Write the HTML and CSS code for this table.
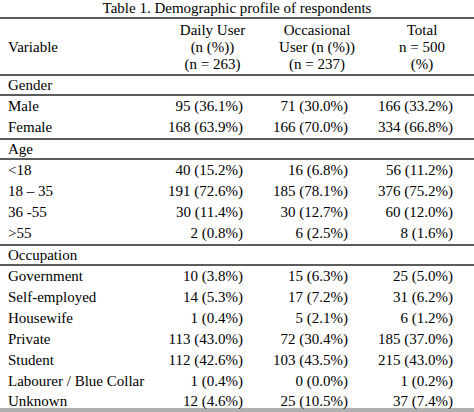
FILE: index.html
```html
<!DOCTYPE html>
<html>
<head>
<meta charset="utf-8">
<link rel="stylesheet" href="styles.css">
</head>
<body>
<div class="title">Table 1. Demographic profile of respondents</div>
<table class="demo">
  <colgroup>
    <col class="c1"><col class="c2"><col class="c3"><col class="c4">
  </colgroup>
  <thead>
    <tr class="head">
      <th class="var">Variable</th>
      <th class="h2">Daily User<br>(n (%))<br>(n = 263)</th>
      <th class="h3">Occasional<br>User (n (%))<br>(n = 237)</th>
      <th class="h4">Total<br>n = 500<br>(%)</th>
    </tr>
  </thead>
  <tbody>
    <tr class="sec"><td colspan="4">Gender</td></tr>
    <tr class="row"><td>Male</td><td class="n2">95 (36.1%)</td><td class="n3">71 (30.0%)</td><td class="n4">166 (33.2%)</td></tr>
    <tr class="row last"><td>Female</td><td class="n2">168 (63.9%)</td><td class="n3">166 (70.0%)</td><td class="n4">334 (66.8%)</td></tr>
    <tr class="sec"><td colspan="4">Age</td></tr>
    <tr class="row"><td>&lt;18</td><td class="n2">40 (15.2%)</td><td class="n3">16 (6.8%)</td><td class="n4">56 (11.2%)</td></tr>
    <tr class="row"><td>18 – 35</td><td class="n2">191 (72.6%)</td><td class="n3">185 (78.1%)</td><td class="n4">376 (75.2%)</td></tr>
    <tr class="row"><td>36 -55</td><td class="n2">30 (11.4%)</td><td class="n3">30 (12.7%)</td><td class="n4">60 (12.0%)</td></tr>
    <tr class="row last"><td>&gt;55</td><td class="n2">2 (0.8%)</td><td class="n3">6 (2.5%)</td><td class="n4">8 (1.6%)</td></tr>
    <tr class="sec"><td colspan="4">Occupation</td></tr>
    <tr class="row"><td>Government</td><td class="n2">10 (3.8%)</td><td class="n3">15 (6.3%)</td><td class="n4">25 (5.0%)</td></tr>
    <tr class="row"><td>Self-employed</td><td class="n2">14 (5.3%)</td><td class="n3">17 (7.2%)</td><td class="n4">31 (6.2%)</td></tr>
    <tr class="row"><td>Housewife</td><td class="n2">1 (0.4%)</td><td class="n3">5 (2.1%)</td><td class="n4">6 (1.2%)</td></tr>
    <tr class="row"><td>Private</td><td class="n2">113 (43.0%)</td><td class="n3">72 (30.4%)</td><td class="n4">185 (37.0%)</td></tr>
    <tr class="row"><td>Student</td><td class="n2">112 (42.6%)</td><td class="n3">103 (43.5%)</td><td class="n4">215 (43.0%)</td></tr>
    <tr class="row"><td>Labourer / Blue Collar</td><td class="n2">1 (0.4%)</td><td class="n3">0 (0.0%)</td><td class="n4">1 (0.2%)</td></tr>
    <tr class="row final"><td>Unknown</td><td class="n2">12 (4.6%)</td><td class="n3">25 (10.5%)</td><td class="n4">37 (7.4%)</td></tr>
  </tbody>
</table>
</body>
</html>
```
FILE: styles.css
```css
html, body {
  margin: 0;
  padding: 0;
  background: #ffffff;
}
body {
  width: 474px;
  height: 412px;
  overflow: hidden;
  font-family: "Liberation Serif", "Times New Roman", serif;
  font-size: 15px;
  color: #000000;
}
.title {
  height: 17px;
  line-height: 16px;
  text-align: center;
  border-bottom: 2px solid #5c5c5c;
}
.demo {
  width: 474px;
  border-collapse: collapse;
  table-layout: fixed;
}
.c1 { width: 160px; }
.c2 { width: 90px; }
.c3 { width: 105px; }
.c4 { width: 119px; }
.demo th, .demo td {
  padding: 0;
  font-weight: normal;
  white-space: nowrap;
}
.head th {
  height: 53px;
  line-height: 17px;
  padding-top: 2px;
  text-align: center;
  vertical-align: middle;
  border-bottom: 2px solid #5c5c5c;
}
.head .var {
  text-align: left;
  padding-left: 8px;
}
.head .h2 { padding-left: 15px; }
.head .h3 { padding-left: 29px; }
.head .h4 { padding-left: 15px; }
.sec td {
  height: 17px;
  line-height: 17px;
  padding-top: 1px;
  padding-left: 8px;
  border-bottom: 2px solid #5c5c5c;
}
.row td {
  height: 21px;
  line-height: 21px;
  padding-left: 8px;
}
.row .n2, .row .n3, .row .n4 {
  text-align: right;
  padding-left: 0;
}
.row .n2 { padding-right: 7px; }
.row .n3 { padding-right: 7px; }
.row .n4 { padding-right: 21px; }
.row.last td {
  border-bottom: 2px solid #5c5c5c;
}
.row.final td {
  height: 13px;
  line-height: 13px;
  padding-top: 3px;
  vertical-align: top;
  border-bottom: 4px solid #b0b0b0;
}
```
